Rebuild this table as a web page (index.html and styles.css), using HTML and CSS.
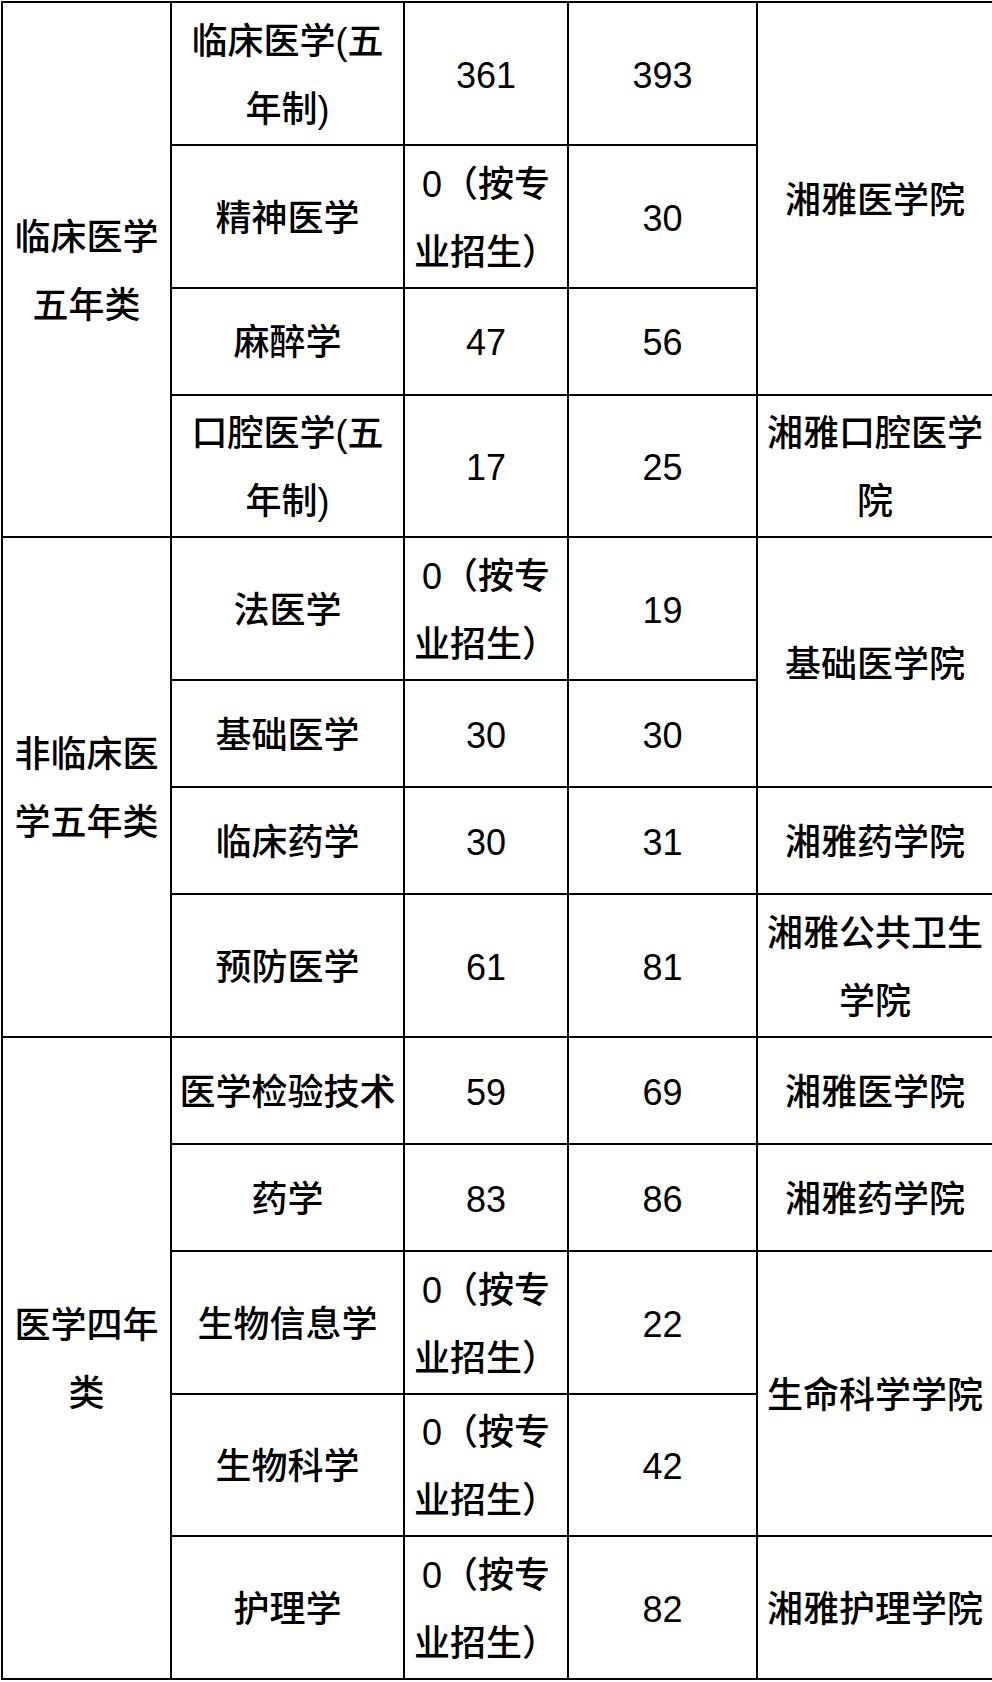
FILE: index.html
```html
<!DOCTYPE html>
<html lang="zh-CN">
<head>
<meta charset="utf-8">
<title>招生计划</title>
<link rel="stylesheet" href="styles.css">
</head>
<body>
<table class="plan">
  <colgroup>
    <col class="c1"><col class="c2"><col class="c3"><col class="c4"><col class="c5">
  </colgroup>
  <tbody>
    <tr>
      <td rowspan="4">临床医学五年类</td>
      <td>临床医学(五年制)</td>
      <td class="num">361</td>
      <td class="num">393</td>
      <td rowspan="3">湘雅医学院</td>
    </tr>
    <tr>
      <td>精神医学</td>
      <td>0（按专业招生）</td>
      <td class="num">30</td>
    </tr>
    <tr class="single">
      <td>麻醉学</td>
      <td class="num">47</td>
      <td class="num">56</td>
    </tr>
    <tr>
      <td>口腔医学(五年制)</td>
      <td class="num">17</td>
      <td class="num">25</td>
      <td>湘雅口腔医学院</td>
    </tr>
    <tr>
      <td rowspan="4">非临床医学五年类</td>
      <td>法医学</td>
      <td>0（按专业招生）</td>
      <td class="num">19</td>
      <td rowspan="2">基础医学院</td>
    </tr>
    <tr class="single">
      <td>基础医学</td>
      <td class="num">30</td>
      <td class="num">30</td>
    </tr>
    <tr class="single">
      <td>临床药学</td>
      <td class="num">30</td>
      <td class="num">31</td>
      <td>湘雅药学院</td>
    </tr>
    <tr>
      <td>预防医学</td>
      <td class="num">61</td>
      <td class="num">81</td>
      <td>湘雅公共卫生学院</td>
    </tr>
    <tr class="single">
      <td rowspan="5">医学四年类</td>
      <td>医学检验技术</td>
      <td class="num">59</td>
      <td class="num">69</td>
      <td>湘雅医学院</td>
    </tr>
    <tr class="single">
      <td>药学</td>
      <td class="num">83</td>
      <td class="num">86</td>
      <td>湘雅药学院</td>
    </tr>
    <tr>
      <td>生物信息学</td>
      <td>0（按专业招生）</td>
      <td class="num">22</td>
      <td rowspan="2">生命科学学院</td>
    </tr>
    <tr>
      <td>生物科学</td>
      <td>0（按专业招生）</td>
      <td class="num">42</td>
    </tr>
    <tr>
      <td>护理学</td>
      <td>0（按专业招生）</td>
      <td class="num">82</td>
      <td>湘雅护理学院</td>
    </tr>
  </tbody>
</table>
</body>
</html>
```

FILE: styles.css
```css
html, body {
  margin: 0;
  padding: 0;
  background: #fff;
}

.plan {
  margin: 1px 0 0 1px;
  width: 991px;
  table-layout: fixed;
  border-collapse: collapse;
  font-family: "Liberation Sans", "Noto Sans CJK SC", sans-serif;
  font-size: 36px;
  font-weight: 500;
  line-height: 68px;
  color: #000;
}

.c1 { width: 169px; }
.c2 { width: 233px; }
.c3 { width: 164px; }
.c4 { width: 189px; }
.c5 { width: 236px; }

.plan td {
  border: 2px solid #000;
  padding: 4.75px 4px 0;
  text-align: center;
  vertical-align: middle;
}

.plan tr.single {
  height: 107px;
}
```
